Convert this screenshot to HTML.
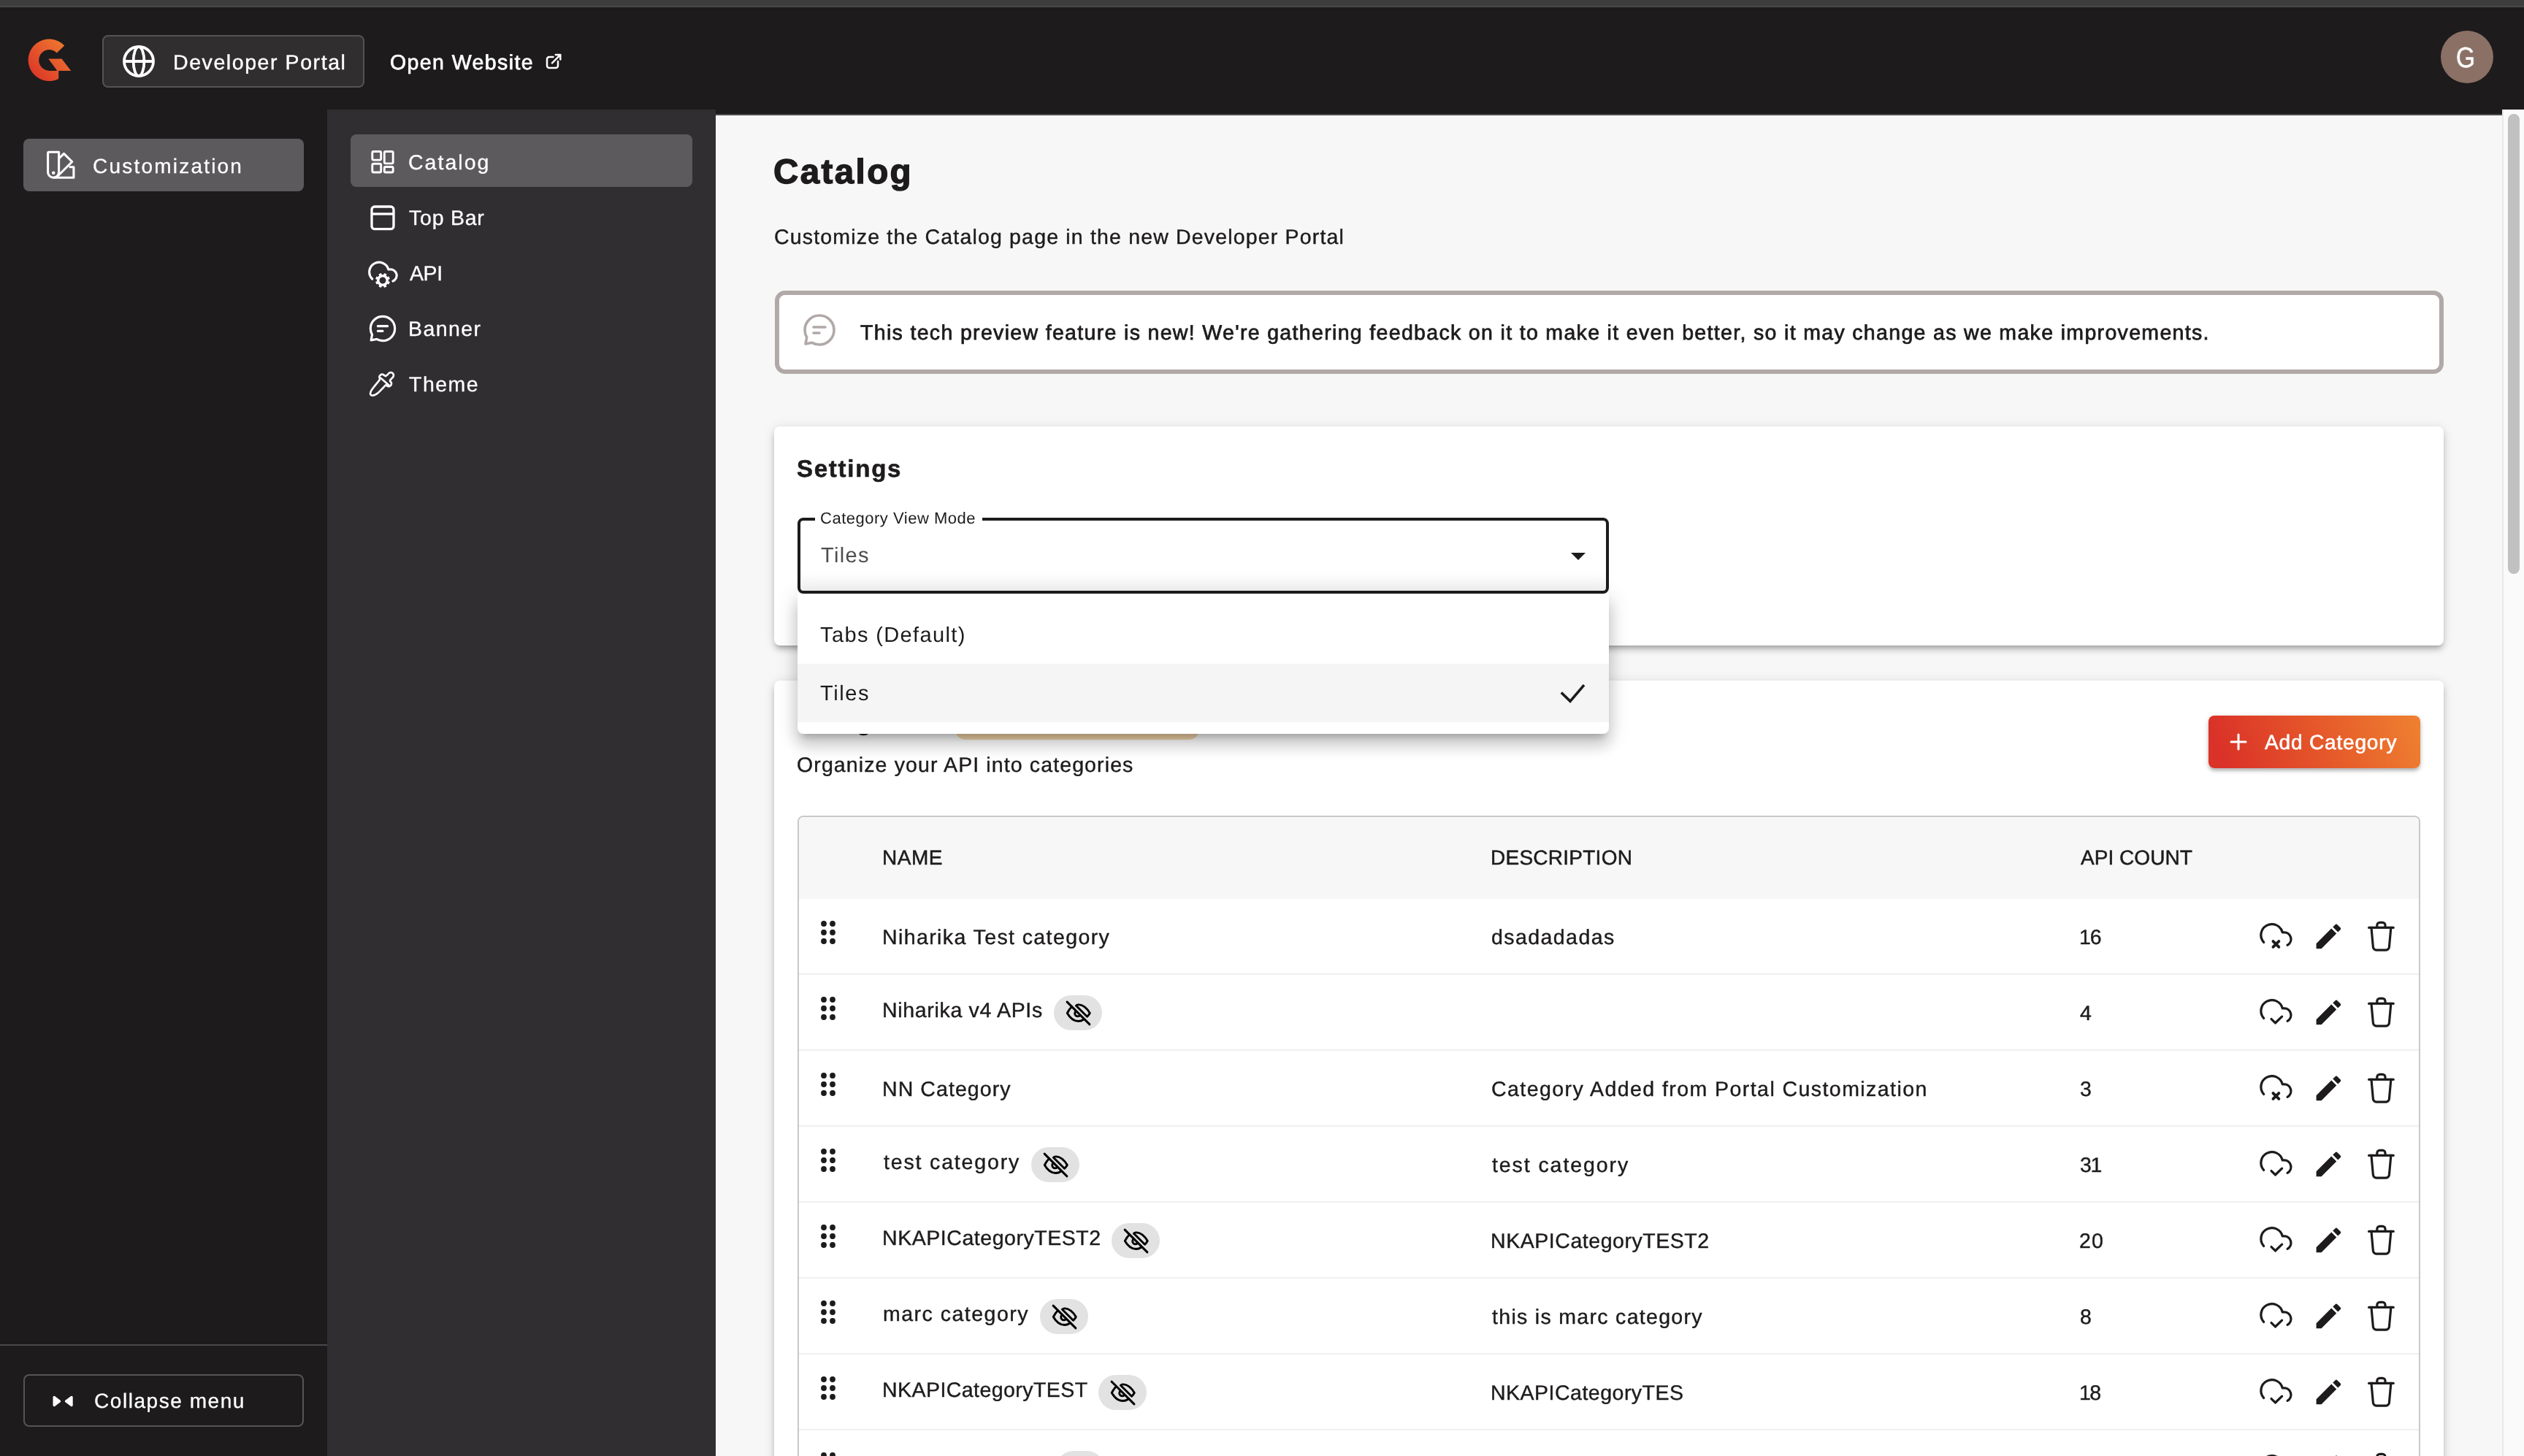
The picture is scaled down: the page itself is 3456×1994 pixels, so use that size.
<!DOCTYPE html>
<html lang="en">
<head>
<meta charset="utf-8">
<title>Catalog - Developer Portal Customization</title>
<style>
*{box-sizing:border-box;margin:0;padding:0}
html,body{width:3456px;height:1994px;overflow:hidden;background:#f7f7f7}
body{position:relative;text-rendering:geometricPrecision;font-family:"Liberation Sans",sans-serif;color:#1d1b1c;-webkit-font-smoothing:antialiased}
.abs,.t{position:absolute}
.t{white-space:nowrap;line-height:1;display:block;will-change:transform}
svg{position:absolute;overflow:visible}
.topstrip{left:0;top:0;width:3456px;height:10px;background:#3d3d3d;border-bottom:2px solid #474948}
header{position:absolute;left:0;top:10px;width:3456px;height:148px;background:#1d1b1c;color:#fff}
.hline{left:980px;top:156px;width:2446px;height:2px;background:#4b494b}
.portal-btn{left:140px;top:38px;width:359px;height:72px;border:2px solid #555355;border-radius:8px;background:#302e2f}
.avatar{left:3342px;top:32px;width:72px;height:72px;border-radius:50%;background:#8b7066}
nav.side1{position:absolute;left:0;top:158px;width:448px;height:1836px;background:#1d1b1c;color:#fff}
nav.side2{position:absolute;left:448px;top:150px;width:532px;height:1844px;background:#302e30;color:#fff}
.active{background:#5c5a5c;border-radius:8px}
.sep{left:0;top:1683px;width:448px;height:2px;background:#4a484a}
.collapse{left:32px;top:1724px;width:384px;height:72px;border:2px solid #565456;border-radius:8px}
main{position:absolute;left:980px;top:158px;width:2446px;height:1836px;background:#f7f7f7}
.scroll{left:3426px;top:150px;width:30px;height:1844px;background:#fafafa;border-left:2px solid #e9e9e9}
.thumb{left:6px;top:6px;width:16px;height:630px;border-radius:8px;background:#c1c1c1}
.card{background:#fff;border-radius:8px;box-shadow:0 6px 6px -4px rgba(0,0,0,.2),0 6px 8px 0 rgba(0,0,0,.14),0 2px 16px 0 rgba(0,0,0,.12)}
.banner{left:81px;top:240px;width:2285px;height:114px;border:6px solid #b1a9a8;border-radius:14px;background:#fff}
.select{left:32px;top:125px;width:1111px;height:104px;border:4px solid #1d1b1c;border-radius:8px;background:linear-gradient(#fff 72%,#f3f3f3)}
.notch{left:20px;top:-6px;width:229px;height:10px;background:#fff}
.panel{left:1092px;top:813px;width:1111px;height:192px;background:#fff;border-radius:0 0 8px 8px;box-shadow:0 10px 10px -6px rgba(0,0,0,.2),0 16px 20px 2px rgba(0,0,0,.14),0 6px 28px 4px rgba(0,0,0,.12)}
.opt{left:0;width:1111px;height:80px}
.opt.sel{background:#f5f5f5}
.badge-warn{left:248px;top:30px;width:334px;height:51px;border-radius:14px;background:#f8d9ab}
.addbtn{left:1964px;top:48px;width:290px;height:72px;border-radius:8px;background:linear-gradient(68deg,#da3228 8%,#e5572a 52%,#ee7e30 96%);box-shadow:0 4px 5px -1px rgba(0,0,0,.25),0 2px 8px 0 rgba(0,0,0,.14);color:#fff}
.table{left:32px;top:185px;width:2222px;height:1100px;border:2px solid #cbc8c7;border-radius:8px;background:#fff;overflow:hidden}
.thead{left:0;top:0;width:2218px;height:112px;background:#f7f7f7}
.row{left:0;width:2218px;height:104px;border-bottom:2px solid #f1efef}
.hid{width:66px;height:48px;border-radius:24px;background:#e2e2e2}
</style>
</head>
<body>
<div class="abs topstrip"></div>

<header>
<svg style="left:0;top:-10px" width="140" height="168" viewBox="0 0 140 168" aria-label="Gravitee">
<defs><linearGradient id="lg" x1="44" y1="106" x2="94" y2="58" gradientUnits="userSpaceOnUse"><stop offset="0" stop-color="#dc3528"/><stop offset="1" stop-color="#f07c30"/></linearGradient></defs>
<path fill="url(#lg)" d="M88.2 62.5A28.75 28.75 0 1 0 80.2 108V96.9H67.3A14.4 14.4 0 1 1 77.8 72.4Z"/>
<path fill="url(#lg)" d="M66.2 80.5H84.5L97.2 97.1H78.4Z"/>
</svg>
<div class="abs portal-btn">
<svg style="left:24px;top:10px" width="48" height="48" viewBox="0 0 48 48" fill="none" stroke="#fff" stroke-width="3.8"><circle cx="24" cy="24" r="20"/><ellipse cx="24" cy="24" rx="7.4" ry="20"/><path d="M4 24H44"/></svg>
<span class="t" style="left:94.7px;top:21.9px;font-size:28.5px;letter-spacing:1.578px;color:#fff;-webkit-text-stroke:0.4px currentColor;">Developer Portal</span>
</div>
<span class="t" style="left:533.7px;top:61.9px;font-size:28.5px;letter-spacing:1.413px;color:#fff;-webkit-text-stroke:0.7px currentColor;">Open Website</span>
<svg style="left:744px;top:60px" width="28" height="28" viewBox="744 70 28 28" fill="none" stroke="#fff" stroke-width="2.5" stroke-linecap="round" stroke-linejoin="round"><path d="M757.5 78.1H752a3 3 0 0 0-3 3V90a3 3 0 0 0 3 3h9a3 3 0 0 0 3-3V84"/><path d="M756 86.3L767.2 75M760.8 74.9H767.3V81.6"/></svg>
<div class="abs avatar"><span class="t" style="left:-2.0px;top:17.6px;font-size:39px;letter-spacing:0.000px;color:#fff;-webkit-text-stroke:0.5px currentColor;width:72px;text-align:center;transform:scaleX(.86);">G</span></div>
</header>
<div class="abs hline"></div>
<nav class="side1">
<div class="abs active" style="left:32px;top:32px;width:384px;height:72px">
<svg style="left:28px;top:12px" width="48" height="48" viewBox="60 202 48 48" fill="none" stroke="#fff" stroke-width="3.1" stroke-linejoin="round"><path d="M67.1 208.2H80.6V235.7A7.5 7.5 0 0 1 65.6 235.7V209.7A1.5 1.5 0 0 1 67.1 208.2Z"/><path d="M80.6 217.2L87.5 210.3L98.7 221.5L78.7 241.5"/><path d="M94.6 228.8H100.9V243.3H73.1"/><circle cx="73.2" cy="236.7" r="2.3" fill="#fff" stroke="none"/></svg>
<span class="t" style="left:95.1px;top:23.5px;font-size:28px;letter-spacing:2.211px;color:#fff;-webkit-text-stroke:0.3px currentColor;">Customization</span>
</div>
<div class="abs sep"></div>
<div class="abs collapse">
<svg style="left:36px;top:24px" width="34" height="22" viewBox="70 1907 34 22" fill="#fff" stroke="#fff" stroke-width="3.2" stroke-linejoin="round"><path d="M74.1 1912.4V1923.6L81.6 1918Z"/><path d="M98.1 1912.4V1923.6L90.4 1918Z"/></svg>
<span class="t" style="left:95.3px;top:21.3px;font-size:28px;letter-spacing:1.551px;color:#fff;-webkit-text-stroke:0.3px currentColor;">Collapse menu</span>
</div>
</nav>
<nav class="side2">
<div class="abs active" style="left:32px;top:34px;width:468px;height:72px">
<svg style="left:24px;top:18px" width="40" height="40" viewBox="0 0 40 40" fill="none" stroke="#fff" stroke-width="2.9" stroke-linecap="round" stroke-linejoin="round"><rect x="5.8" y="5.5" width="11.9" height="11.6" rx="1.8"/><rect x="22.3" y="5.5" width="11.9" height="16.4" rx="1.8"/><rect x="5.8" y="22.2" width="11.9" height="11.8" rx="1.8"/><rect x="22.3" y="26.5" width="11.9" height="7.5" rx="1.8"/></svg>
<span class="t" style="left:78.9px;top:25.3px;font-size:28.5px;letter-spacing:2.025px;color:#fff;-webkit-text-stroke:0.3px currentColor;">Catalog</span>
</div>
<div class="abs" style="left:32px;top:110px;width:468px;height:72px">
<svg style="left:24px;top:18px" width="40" height="40" viewBox="0 0 24 24" fill="none" stroke="#fff" stroke-width="2.0" stroke-linecap="round" stroke-linejoin="round"><rect x="3" y="3" width="18" height="18.4" rx="2.4"/><path d="M3 9H21" stroke-linecap="butt"/></svg>
<span class="t" style="left:79.7px;top:25.3px;font-size:28.5px;letter-spacing:0.766px;color:#fff;-webkit-text-stroke:0.3px currentColor;">Top Bar</span>
</div>
<div class="abs" style="left:32px;top:186px;width:468px;height:72px">
<svg style="left:24px;top:18px" width="40" height="40" viewBox="0 0 24 24" fill="none" stroke="#fff" stroke-width="1.9" stroke-linecap="round" stroke-linejoin="round"><path d="M20.4 18.6A5 5 0 0 0 18 9h-1.26A8 8 0 1 0 3.4 16.8"/><circle cx="12" cy="18" r="3.75" stroke-width="2.1"/><path d="M16.07 19.68L17.50 20.28M13.68 22.07L14.28 23.50M10.32 22.07L9.72 23.50M7.93 19.68L6.50 20.28M7.93 16.32L6.50 15.72M10.32 13.93L9.72 12.50M13.68 13.93L14.28 12.50M16.07 16.32L17.50 15.72" stroke-width="2.3" stroke-linecap="butt"/></svg>
<span class="t" style="left:80.9px;top:25.3px;font-size:28.5px;letter-spacing:-0.426px;color:#fff;-webkit-text-stroke:0.3px currentColor;">API</span>
</div>
<div class="abs" style="left:32px;top:262px;width:468px;height:72px">
<svg style="left:24px;top:18px" width="40" height="40" viewBox="0 0 24 24" fill="none" stroke="#fff" stroke-width="1.9" stroke-linecap="round" stroke-linejoin="round"><path d="M8 10H16M8 14H12"/><path d="M12 22C17.5228 22 22 17.5228 22 12C22 6.47715 17.5228 2 12 2C6.47715 2 2 6.47715 2 12C2 13.8214 2.48697 15.5291 3.33782 17L2.5 21.5L7 20.6622C8.47087 21.513 10.1786 22 12 22Z"/></svg>
<span class="t" style="left:78.7px;top:25.3px;font-size:28.5px;letter-spacing:1.442px;color:#fff;-webkit-text-stroke:0.3px currentColor;">Banner</span>
</div>
<div class="abs" style="left:32px;top:338px;width:468px;height:72px">
<svg style="left:24px;top:18px" width="40" height="40" viewBox="0 0 24 24" fill="none" stroke="#fff" stroke-width="1.6" stroke-linecap="round" stroke-linejoin="round"><path d="M9.55 8.30C9.97 7.32 9.13 6.69 9.21 6.08C9.29 5.47 9.63 4.98 10.04 4.64C10.45 4.30 11.16 4.02 11.68 4.02C12.20 4.02 12.68 4.40 13.13 4.64C13.58 4.88 13.88 5.54 14.36 5.47C14.84 5.40 15.50 4.68 16.01 4.23C16.53 3.78 16.90 3.06 17.45 2.79C18.00 2.52 18.76 2.41 19.31 2.58C19.86 2.75 20.51 3.30 20.75 3.82C20.99 4.33 20.96 5.09 20.75 5.67C20.54 6.25 19.92 6.84 19.51 7.32C19.10 7.80 18.52 8.18 18.28 8.56C18.04 8.94 17.93 9.21 18.07 9.59C18.21 9.97 18.96 10.30 19.10 10.82C19.24 11.34 19.17 12.16 18.90 12.68C18.62 13.20 18.00 13.77 17.45 13.91C16.90 14.05 16.08 13.67 15.60 13.50C15.12 13.33 15.24 12.49 14.57 12.88C13.90 13.27 12.60 14.85 11.60 15.85C10.60 16.85 9.54 18.05 8.59 18.86C7.64 19.67 6.78 20.30 5.92 20.71C5.06 21.12 4.09 21.36 3.44 21.33C2.79 21.30 2.21 21.03 2.00 20.51C1.79 20.00 1.90 19.06 2.21 18.24C2.52 17.41 3.10 16.61 3.85 15.56C4.60 14.51 5.75 13.16 6.70 11.95C7.65 10.74 9.13 9.28 9.55 8.30Z"/><path d="M10.45 7.12L17.04 12.88"/></svg>
<span class="t" style="left:79.7px;top:25.3px;font-size:28.5px;letter-spacing:1.476px;color:#fff;-webkit-text-stroke:0.3px currentColor;">Theme</span>
</div>
</nav>
<main>
<h1 class="t" style="left:79.1px;top:53.8px;font-size:47.5px;letter-spacing:2.407px;font-weight:700;-webkit-text-stroke:1.4px currentColor;">Catalog</h1>
<p class="t" style="left:79.6px;top:152.5px;font-size:28.5px;letter-spacing:1.175px;-webkit-text-stroke:0.4px currentColor;">Customize the Catalog page in the new Developer Portal</p>
<div class="abs banner">
<svg style="left:31px;top:24px" width="48" height="48" viewBox="0 0 24 24" fill="none" stroke="#b1a9a8" stroke-width="1.8" stroke-linecap="round" stroke-linejoin="round"><path d="M8 10H16M8 14H12"/><path d="M12 22C17.5228 22 22 17.5228 22 12C22 6.47715 17.5228 2 12 2C6.47715 2 2 6.47715 2 12C2 13.8214 2.48697 15.5291 3.33782 17L2.5 21.5L7 20.6622C8.47087 21.513 10.1786 22 12 22Z"/></svg>
<span class="t" style="left:111.1px;top:37.8px;font-size:28.5px;letter-spacing:1.333px;-webkit-text-stroke:0.75px currentColor;">This tech preview feature is new! We&#x27;re gathering feedback on it to make it even better, so it may change as we make improvements.</span>
</div>
<section class="abs card" style="left:80px;top:426px;width:2286px;height:300px">
<h2 class="t" style="left:31.2px;top:40.8px;font-size:33px;letter-spacing:1.746px;font-weight:700;-webkit-text-stroke:0.6px currentColor;">Settings</h2>
<div class="abs select">
<div class="abs notch"></div>
<span class="t" style="left:27.4px;top:-13.9px;font-size:22px;letter-spacing:0.511px;">Category View Mode</span>
<span class="t" style="left:27.8px;top:34.1px;font-size:29px;letter-spacing:1.337px;color:#4f4d4e;">Tiles</span>
<svg style="left:1055px;top:44px" width="20" height="10" viewBox="0 0 20 10"><path d="M0 0H20L10 10Z" fill="#1d1b1c"/></svg>
</div>
</section>
<section class="abs card" style="left:80px;top:774px;width:2286px;height:1300px">
<h2 class="t" style="left:30.6px;top:40.1px;font-size:33px;letter-spacing:2.572px;font-weight:700;-webkit-text-stroke:0.6px currentColor;">Categories</h2>
<div class="abs badge-warn"></div>
<p class="t" style="left:31.0px;top:102.4px;font-size:28.5px;letter-spacing:1.119px;-webkit-text-stroke:0.4px currentColor;">Organize your API into categories</p>
<div class="abs addbtn">
<svg style="left:30px;top:25px" width="22" height="22" viewBox="0 0 22 22" stroke="#fff" stroke-width="3" stroke-linecap="round"><path d="M11 1V21M1 11H21"/></svg>
<span class="t" style="left:76.6px;top:23.3px;font-size:28px;letter-spacing:0.836px;color:#fff;-webkit-text-stroke:0.6px currentColor;">Add Category</span>
</div>
<div class="abs table">
<div class="abs thead">
<span class="t" style="left:114.2px;top:42.0px;font-size:28px;letter-spacing:0.501px;-webkit-text-stroke:0.5px currentColor;">NAME</span>
<span class="t" style="left:947.2px;top:42.0px;font-size:28px;letter-spacing:0.253px;-webkit-text-stroke:0.5px currentColor;">DESCRIPTION</span>
<span class="t" style="left:1754.6px;top:42.0px;font-size:28px;letter-spacing:0.043px;-webkit-text-stroke:0.5px currentColor;">API COUNT</span>
</div>
<div class="abs row" style="top:112px">
<svg style="left:16px;top:22px" width="48" height="48" viewBox="0 0 24 24" fill="#1d1b1c"><circle cx="9" cy="6" r="1.95"/><circle cx="15" cy="6" r="1.95"/><circle cx="9" cy="12" r="1.95"/><circle cx="15" cy="12" r="1.95"/><circle cx="9" cy="18" r="1.95"/><circle cx="15" cy="18" r="1.95"/></svg>
<span class="t" style="left:114.3px;top:38.5px;font-size:28.5px;letter-spacing:1.398px;-webkit-text-stroke:0.4px currentColor;">Niharika Test category</span>
<span class="t" style="left:948.4px;top:38.5px;font-size:28.5px;letter-spacing:1.436px;-webkit-text-stroke:0.4px currentColor;">dsadadadas</span>
<span class="t" style="left:1752.5px;top:38.5px;font-size:28.5px;letter-spacing:0.000px;-webkit-text-stroke:0.4px currentColor;letter-spacing:-1px;">16</span>
<svg style="left:1999.6px;top:28.6px" width="44.8" height="44.8" viewBox="0 0 24 24" fill="none" stroke="#1d1b1c" stroke-width="1.75" stroke-linecap="round" stroke-linejoin="round"><path d="M20.39 18.39A5 5 0 0 0 18 9h-1.26A8 8 0 1 0 3 16.3"/><path d="M9.9 15.6L14.1 19.8M14.1 15.6L9.9 19.8" stroke-width="2.1"/></svg>
<svg style="left:2071.6px;top:28.6px" width="44.8" height="44.8" viewBox="0 0 24 24" fill="#1d1b1c"><path d="M3 17.25V21h3.75L17.81 9.94l-3.75-3.75L3 17.25zM20.71 7.04c.39-.39.39-1.02 0-1.41l-2.34-2.34c-.39-.39-1.02-.39-1.41 0l-1.83 1.83 3.75 3.75 1.83-1.83z"/></svg>
<svg style="left:2143.6px;top:28.6px" width="44.8" height="44.8" viewBox="0 0 24 24" fill="none" stroke="#1d1b1c" stroke-width="1.7" stroke-linecap="round" stroke-linejoin="round"><path d="M3 5.6H21"/><path d="M9 5.6V3.8a2 2 0 0 1 2-2h2a2 2 0 0 1 2 2V5.6"/><path d="M4.8 5.6L6.1 19.9a2.3 2.3 0 0 0 2.3 2.1h7.2a2.3 2.3 0 0 0 2.3-2.1L19.2 5.6"/></svg>
</div>
<div class="abs row" style="top:216px">
<svg style="left:16px;top:22px" width="48" height="48" viewBox="0 0 24 24" fill="#1d1b1c"><circle cx="9" cy="6" r="1.95"/><circle cx="15" cy="6" r="1.95"/><circle cx="9" cy="12" r="1.95"/><circle cx="15" cy="12" r="1.95"/><circle cx="9" cy="18" r="1.95"/><circle cx="15" cy="18" r="1.95"/></svg>
<span class="t" style="left:114.3px;top:35.2px;font-size:28.5px;letter-spacing:0.672px;-webkit-text-stroke:0.4px currentColor;">Niharika v4 APIs</span>
<div class="abs hid" style="left:349.2px;top:28px"><svg style="left:12.5px;top:3.5px" width="41" height="41" viewBox="-20.5 -20.5 41 41" fill="none" stroke="#000" stroke-width="2.9" stroke-linecap="round" stroke-linejoin="round"><path d="M-15.4-15.4L15.4 15.4"/><path d="M-9-8.8C-11.6-6.4-13.6-3.2-15.2 0C-12 5.6-6.4 11 0 11C2.6 11 5 10.2 7.2 8.7"/><path d="M-3.1-10.3C-2-11.4-.6-11.7 .6-11.6C7-11.2 12.6-5.4 15.8 0C14.8 1.8 13.6 3.4 12 4.8Z"/><path d="M-3.6-2.4A3.9 3.9 0 1 0 2 3.2"/></svg></div>
<span class="t" style="left:1754.0px;top:38.5px;font-size:28.5px;letter-spacing:0.000px;-webkit-text-stroke:0.4px currentColor;">4</span>
<svg style="left:1999.6px;top:28.6px" width="44.8" height="44.8" viewBox="0 0 24 24" fill="none" stroke="#1d1b1c" stroke-width="1.75" stroke-linecap="round" stroke-linejoin="round"><path d="M20.39 18.39A5 5 0 0 0 18 9h-1.26A8 8 0 1 0 3 16.3"/><path d="M8.6 16.9L11.5 19.8L16.4 15.1"/></svg>
<svg style="left:2071.6px;top:28.6px" width="44.8" height="44.8" viewBox="0 0 24 24" fill="#1d1b1c"><path d="M3 17.25V21h3.75L17.81 9.94l-3.75-3.75L3 17.25zM20.71 7.04c.39-.39.39-1.02 0-1.41l-2.34-2.34c-.39-.39-1.02-.39-1.41 0l-1.83 1.83 3.75 3.75 1.83-1.83z"/></svg>
<svg style="left:2143.6px;top:28.6px" width="44.8" height="44.8" viewBox="0 0 24 24" fill="none" stroke="#1d1b1c" stroke-width="1.7" stroke-linecap="round" stroke-linejoin="round"><path d="M3 5.6H21"/><path d="M9 5.6V3.8a2 2 0 0 1 2-2h2a2 2 0 0 1 2 2V5.6"/><path d="M4.8 5.6L6.1 19.9a2.3 2.3 0 0 0 2.3 2.1h7.2a2.3 2.3 0 0 0 2.3-2.1L19.2 5.6"/></svg>
</div>
<div class="abs row" style="top:320px">
<svg style="left:16px;top:22px" width="48" height="48" viewBox="0 0 24 24" fill="#1d1b1c"><circle cx="9" cy="6" r="1.95"/><circle cx="15" cy="6" r="1.95"/><circle cx="9" cy="12" r="1.95"/><circle cx="15" cy="12" r="1.95"/><circle cx="9" cy="18" r="1.95"/><circle cx="15" cy="18" r="1.95"/></svg>
<span class="t" style="left:114.3px;top:38.5px;font-size:28.5px;letter-spacing:1.077px;-webkit-text-stroke:0.4px currentColor;">NN Category</span>
<span class="t" style="left:948.2px;top:38.5px;font-size:28.5px;letter-spacing:1.441px;-webkit-text-stroke:0.4px currentColor;">Category Added from Portal Customization</span>
<span class="t" style="left:1753.6px;top:38.5px;font-size:28.5px;letter-spacing:0.000px;-webkit-text-stroke:0.4px currentColor;">3</span>
<svg style="left:1999.6px;top:28.6px" width="44.8" height="44.8" viewBox="0 0 24 24" fill="none" stroke="#1d1b1c" stroke-width="1.75" stroke-linecap="round" stroke-linejoin="round"><path d="M20.39 18.39A5 5 0 0 0 18 9h-1.26A8 8 0 1 0 3 16.3"/><path d="M9.9 15.6L14.1 19.8M14.1 15.6L9.9 19.8" stroke-width="2.1"/></svg>
<svg style="left:2071.6px;top:28.6px" width="44.8" height="44.8" viewBox="0 0 24 24" fill="#1d1b1c"><path d="M3 17.25V21h3.75L17.81 9.94l-3.75-3.75L3 17.25zM20.71 7.04c.39-.39.39-1.02 0-1.41l-2.34-2.34c-.39-.39-1.02-.39-1.41 0l-1.83 1.83 3.75 3.75 1.83-1.83z"/></svg>
<svg style="left:2143.6px;top:28.6px" width="44.8" height="44.8" viewBox="0 0 24 24" fill="none" stroke="#1d1b1c" stroke-width="1.7" stroke-linecap="round" stroke-linejoin="round"><path d="M3 5.6H21"/><path d="M9 5.6V3.8a2 2 0 0 1 2-2h2a2 2 0 0 1 2 2V5.6"/><path d="M4.8 5.6L6.1 19.9a2.3 2.3 0 0 0 2.3 2.1h7.2a2.3 2.3 0 0 0 2.3-2.1L19.2 5.6"/></svg>
</div>
<div class="abs row" style="top:424px">
<svg style="left:16px;top:22px" width="48" height="48" viewBox="0 0 24 24" fill="#1d1b1c"><circle cx="9" cy="6" r="1.95"/><circle cx="15" cy="6" r="1.95"/><circle cx="9" cy="12" r="1.95"/><circle cx="15" cy="12" r="1.95"/><circle cx="9" cy="18" r="1.95"/><circle cx="15" cy="18" r="1.95"/></svg>
<span class="t" style="left:116.2px;top:35.2px;font-size:28.5px;letter-spacing:1.843px;-webkit-text-stroke:0.4px currentColor;">test category</span>
<div class="abs hid" style="left:318.2px;top:28px"><svg style="left:12.5px;top:3.5px" width="41" height="41" viewBox="-20.5 -20.5 41 41" fill="none" stroke="#000" stroke-width="2.9" stroke-linecap="round" stroke-linejoin="round"><path d="M-15.4-15.4L15.4 15.4"/><path d="M-9-8.8C-11.6-6.4-13.6-3.2-15.2 0C-12 5.6-6.4 11 0 11C2.6 11 5 10.2 7.2 8.7"/><path d="M-3.1-10.3C-2-11.4-.6-11.7 .6-11.6C7-11.2 12.6-5.4 15.8 0C14.8 1.8 13.6 3.4 12 4.8Z"/><path d="M-3.6-2.4A3.9 3.9 0 1 0 2 3.2"/></svg></div>
<span class="t" style="left:949.2px;top:38.5px;font-size:28.5px;letter-spacing:1.918px;-webkit-text-stroke:0.4px currentColor;">test category</span>
<span class="t" style="left:1753.6px;top:38.5px;font-size:28.5px;letter-spacing:0.000px;-webkit-text-stroke:0.4px currentColor;letter-spacing:-1.3px;">31</span>
<svg style="left:1999.6px;top:28.6px" width="44.8" height="44.8" viewBox="0 0 24 24" fill="none" stroke="#1d1b1c" stroke-width="1.75" stroke-linecap="round" stroke-linejoin="round"><path d="M20.39 18.39A5 5 0 0 0 18 9h-1.26A8 8 0 1 0 3 16.3"/><path d="M8.6 16.9L11.5 19.8L16.4 15.1"/></svg>
<svg style="left:2071.6px;top:28.6px" width="44.8" height="44.8" viewBox="0 0 24 24" fill="#1d1b1c"><path d="M3 17.25V21h3.75L17.81 9.94l-3.75-3.75L3 17.25zM20.71 7.04c.39-.39.39-1.02 0-1.41l-2.34-2.34c-.39-.39-1.02-.39-1.41 0l-1.83 1.83 3.75 3.75 1.83-1.83z"/></svg>
<svg style="left:2143.6px;top:28.6px" width="44.8" height="44.8" viewBox="0 0 24 24" fill="none" stroke="#1d1b1c" stroke-width="1.7" stroke-linecap="round" stroke-linejoin="round"><path d="M3 5.6H21"/><path d="M9 5.6V3.8a2 2 0 0 1 2-2h2a2 2 0 0 1 2 2V5.6"/><path d="M4.8 5.6L6.1 19.9a2.3 2.3 0 0 0 2.3 2.1h7.2a2.3 2.3 0 0 0 2.3-2.1L19.2 5.6"/></svg>
</div>
<div class="abs row" style="top:528px">
<svg style="left:16px;top:22px" width="48" height="48" viewBox="0 0 24 24" fill="#1d1b1c"><circle cx="9" cy="6" r="1.95"/><circle cx="15" cy="6" r="1.95"/><circle cx="9" cy="12" r="1.95"/><circle cx="15" cy="12" r="1.95"/><circle cx="9" cy="18" r="1.95"/><circle cx="15" cy="18" r="1.95"/></svg>
<span class="t" style="left:114.3px;top:35.2px;font-size:28.5px;letter-spacing:0.548px;-webkit-text-stroke:0.4px currentColor;">NKAPICategoryTEST2</span>
<div class="abs hid" style="left:428.0px;top:28px"><svg style="left:12.5px;top:3.5px" width="41" height="41" viewBox="-20.5 -20.5 41 41" fill="none" stroke="#000" stroke-width="2.9" stroke-linecap="round" stroke-linejoin="round"><path d="M-15.4-15.4L15.4 15.4"/><path d="M-9-8.8C-11.6-6.4-13.6-3.2-15.2 0C-12 5.6-6.4 11 0 11C2.6 11 5 10.2 7.2 8.7"/><path d="M-3.1-10.3C-2-11.4-.6-11.7 .6-11.6C7-11.2 12.6-5.4 15.8 0C14.8 1.8 13.6 3.4 12 4.8Z"/><path d="M-3.6-2.4A3.9 3.9 0 1 0 2 3.2"/></svg></div>
<span class="t" style="left:947.3px;top:38.5px;font-size:28.5px;letter-spacing:0.548px;-webkit-text-stroke:0.4px currentColor;">NKAPICategoryTEST2</span>
<span class="t" style="left:1753.3px;top:38.5px;font-size:28.5px;letter-spacing:0.000px;-webkit-text-stroke:0.4px currentColor;letter-spacing:1.2px;">20</span>
<svg style="left:1999.6px;top:28.6px" width="44.8" height="44.8" viewBox="0 0 24 24" fill="none" stroke="#1d1b1c" stroke-width="1.75" stroke-linecap="round" stroke-linejoin="round"><path d="M20.39 18.39A5 5 0 0 0 18 9h-1.26A8 8 0 1 0 3 16.3"/><path d="M8.6 16.9L11.5 19.8L16.4 15.1"/></svg>
<svg style="left:2071.6px;top:28.6px" width="44.8" height="44.8" viewBox="0 0 24 24" fill="#1d1b1c"><path d="M3 17.25V21h3.75L17.81 9.94l-3.75-3.75L3 17.25zM20.71 7.04c.39-.39.39-1.02 0-1.41l-2.34-2.34c-.39-.39-1.02-.39-1.41 0l-1.83 1.83 3.75 3.75 1.83-1.83z"/></svg>
<svg style="left:2143.6px;top:28.6px" width="44.8" height="44.8" viewBox="0 0 24 24" fill="none" stroke="#1d1b1c" stroke-width="1.7" stroke-linecap="round" stroke-linejoin="round"><path d="M3 5.6H21"/><path d="M9 5.6V3.8a2 2 0 0 1 2-2h2a2 2 0 0 1 2 2V5.6"/><path d="M4.8 5.6L6.1 19.9a2.3 2.3 0 0 0 2.3 2.1h7.2a2.3 2.3 0 0 0 2.3-2.1L19.2 5.6"/></svg>
</div>
<div class="abs row" style="top:632px">
<svg style="left:16px;top:22px" width="48" height="48" viewBox="0 0 24 24" fill="#1d1b1c"><circle cx="9" cy="6" r="1.95"/><circle cx="15" cy="6" r="1.95"/><circle cx="9" cy="12" r="1.95"/><circle cx="15" cy="12" r="1.95"/><circle cx="9" cy="18" r="1.95"/><circle cx="15" cy="18" r="1.95"/></svg>
<span class="t" style="left:114.7px;top:35.2px;font-size:28.5px;letter-spacing:1.499px;-webkit-text-stroke:0.4px currentColor;">marc category</span>
<div class="abs hid" style="left:330.4px;top:28px"><svg style="left:12.5px;top:3.5px" width="41" height="41" viewBox="-20.5 -20.5 41 41" fill="none" stroke="#000" stroke-width="2.9" stroke-linecap="round" stroke-linejoin="round"><path d="M-15.4-15.4L15.4 15.4"/><path d="M-9-8.8C-11.6-6.4-13.6-3.2-15.2 0C-12 5.6-6.4 11 0 11C2.6 11 5 10.2 7.2 8.7"/><path d="M-3.1-10.3C-2-11.4-.6-11.7 .6-11.6C7-11.2 12.6-5.4 15.8 0C14.8 1.8 13.6 3.4 12 4.8Z"/><path d="M-3.6-2.4A3.9 3.9 0 1 0 2 3.2"/></svg></div>
<span class="t" style="left:949.2px;top:38.5px;font-size:28.5px;letter-spacing:1.313px;-webkit-text-stroke:0.4px currentColor;">this is marc category</span>
<span class="t" style="left:1753.5px;top:38.5px;font-size:28.5px;letter-spacing:0.000px;-webkit-text-stroke:0.4px currentColor;">8</span>
<svg style="left:1999.6px;top:28.6px" width="44.8" height="44.8" viewBox="0 0 24 24" fill="none" stroke="#1d1b1c" stroke-width="1.75" stroke-linecap="round" stroke-linejoin="round"><path d="M20.39 18.39A5 5 0 0 0 18 9h-1.26A8 8 0 1 0 3 16.3"/><path d="M8.6 16.9L11.5 19.8L16.4 15.1"/></svg>
<svg style="left:2071.6px;top:28.6px" width="44.8" height="44.8" viewBox="0 0 24 24" fill="#1d1b1c"><path d="M3 17.25V21h3.75L17.81 9.94l-3.75-3.75L3 17.25zM20.71 7.04c.39-.39.39-1.02 0-1.41l-2.34-2.34c-.39-.39-1.02-.39-1.41 0l-1.83 1.83 3.75 3.75 1.83-1.83z"/></svg>
<svg style="left:2143.6px;top:28.6px" width="44.8" height="44.8" viewBox="0 0 24 24" fill="none" stroke="#1d1b1c" stroke-width="1.7" stroke-linecap="round" stroke-linejoin="round"><path d="M3 5.6H21"/><path d="M9 5.6V3.8a2 2 0 0 1 2-2h2a2 2 0 0 1 2 2V5.6"/><path d="M4.8 5.6L6.1 19.9a2.3 2.3 0 0 0 2.3 2.1h7.2a2.3 2.3 0 0 0 2.3-2.1L19.2 5.6"/></svg>
</div>
<div class="abs row" style="top:736px">
<svg style="left:16px;top:22px" width="48" height="48" viewBox="0 0 24 24" fill="#1d1b1c"><circle cx="9" cy="6" r="1.95"/><circle cx="15" cy="6" r="1.95"/><circle cx="9" cy="12" r="1.95"/><circle cx="15" cy="12" r="1.95"/><circle cx="9" cy="18" r="1.95"/><circle cx="15" cy="18" r="1.95"/></svg>
<span class="t" style="left:114.3px;top:35.2px;font-size:28.5px;letter-spacing:0.449px;-webkit-text-stroke:0.4px currentColor;">NKAPICategoryTEST</span>
<div class="abs hid" style="left:410.3px;top:28px"><svg style="left:12.5px;top:3.5px" width="41" height="41" viewBox="-20.5 -20.5 41 41" fill="none" stroke="#000" stroke-width="2.9" stroke-linecap="round" stroke-linejoin="round"><path d="M-15.4-15.4L15.4 15.4"/><path d="M-9-8.8C-11.6-6.4-13.6-3.2-15.2 0C-12 5.6-6.4 11 0 11C2.6 11 5 10.2 7.2 8.7"/><path d="M-3.1-10.3C-2-11.4-.6-11.7 .6-11.6C7-11.2 12.6-5.4 15.8 0C14.8 1.8 13.6 3.4 12 4.8Z"/><path d="M-3.6-2.4A3.9 3.9 0 1 0 2 3.2"/></svg></div>
<span class="t" style="left:947.3px;top:38.5px;font-size:28.5px;letter-spacing:0.496px;-webkit-text-stroke:0.4px currentColor;">NKAPICategoryTES</span>
<span class="t" style="left:1752.5px;top:38.5px;font-size:28.5px;letter-spacing:0.000px;-webkit-text-stroke:0.4px currentColor;letter-spacing:-1.5px;">18</span>
<svg style="left:1999.6px;top:28.6px" width="44.8" height="44.8" viewBox="0 0 24 24" fill="none" stroke="#1d1b1c" stroke-width="1.75" stroke-linecap="round" stroke-linejoin="round"><path d="M20.39 18.39A5 5 0 0 0 18 9h-1.26A8 8 0 1 0 3 16.3"/><path d="M8.6 16.9L11.5 19.8L16.4 15.1"/></svg>
<svg style="left:2071.6px;top:28.6px" width="44.8" height="44.8" viewBox="0 0 24 24" fill="#1d1b1c"><path d="M3 17.25V21h3.75L17.81 9.94l-3.75-3.75L3 17.25zM20.71 7.04c.39-.39.39-1.02 0-1.41l-2.34-2.34c-.39-.39-1.02-.39-1.41 0l-1.83 1.83 3.75 3.75 1.83-1.83z"/></svg>
<svg style="left:2143.6px;top:28.6px" width="44.8" height="44.8" viewBox="0 0 24 24" fill="none" stroke="#1d1b1c" stroke-width="1.7" stroke-linecap="round" stroke-linejoin="round"><path d="M3 5.6H21"/><path d="M9 5.6V3.8a2 2 0 0 1 2-2h2a2 2 0 0 1 2 2V5.6"/><path d="M4.8 5.6L6.1 19.9a2.3 2.3 0 0 0 2.3 2.1h7.2a2.3 2.3 0 0 0 2.3-2.1L19.2 5.6"/></svg>
</div>
<div class="abs row" style="top:840px">
<svg style="left:16px;top:22px" width="48" height="48" viewBox="0 0 24 24" fill="#1d1b1c"><circle cx="9" cy="6" r="1.95"/><circle cx="15" cy="6" r="1.95"/><circle cx="9" cy="12" r="1.95"/><circle cx="15" cy="12" r="1.95"/><circle cx="9" cy="18" r="1.95"/><circle cx="15" cy="18" r="1.95"/></svg>
<div class="abs hid" style="left:352.0px;top:28px"><svg style="left:12.5px;top:3.5px" width="41" height="41" viewBox="-20.5 -20.5 41 41" fill="none" stroke="#000" stroke-width="2.9" stroke-linecap="round" stroke-linejoin="round"><path d="M-15.4-15.4L15.4 15.4"/><path d="M-9-8.8C-11.6-6.4-13.6-3.2-15.2 0C-12 5.6-6.4 11 0 11C2.6 11 5 10.2 7.2 8.7"/><path d="M-3.1-10.3C-2-11.4-.6-11.7 .6-11.6C7-11.2 12.6-5.4 15.8 0C14.8 1.8 13.6 3.4 12 4.8Z"/><path d="M-3.6-2.4A3.9 3.9 0 1 0 2 3.2"/></svg></div>
<svg style="left:1999.6px;top:28.6px" width="44.8" height="44.8" viewBox="0 0 24 24" fill="none" stroke="#1d1b1c" stroke-width="1.75" stroke-linecap="round" stroke-linejoin="round"><path d="M20.39 18.39A5 5 0 0 0 18 9h-1.26A8 8 0 1 0 3 16.3"/><path d="M8.6 16.9L11.5 19.8L16.4 15.1"/></svg>
<svg style="left:2071.6px;top:28.6px" width="44.8" height="44.8" viewBox="0 0 24 24" fill="#1d1b1c"><path d="M3 17.25V21h3.75L17.81 9.94l-3.75-3.75L3 17.25zM20.71 7.04c.39-.39.39-1.02 0-1.41l-2.34-2.34c-.39-.39-1.02-.39-1.41 0l-1.83 1.83 3.75 3.75 1.83-1.83z"/></svg>
<svg style="left:2143.6px;top:28.6px" width="44.8" height="44.8" viewBox="0 0 24 24" fill="none" stroke="#1d1b1c" stroke-width="1.7" stroke-linecap="round" stroke-linejoin="round"><path d="M3 5.6H21"/><path d="M9 5.6V3.8a2 2 0 0 1 2-2h2a2 2 0 0 1 2 2V5.6"/><path d="M4.8 5.6L6.1 19.9a2.3 2.3 0 0 0 2.3 2.1h7.2a2.3 2.3 0 0 0 2.3-2.1L19.2 5.6"/></svg>
</div>
</div>
</section>
</main>
<div class="abs panel" role="listbox">
<div class="abs opt" style="top:16px"><span class="t" style="left:31.3px;top:27.0px;font-size:29px;letter-spacing:1.380px;">Tabs (Default)</span></div>
<div class="abs opt sel" style="top:96px"><span class="t" style="left:31.3px;top:27.0px;font-size:29px;letter-spacing:1.562px;">Tiles</span>
<svg style="left:1040px;top:24px" width="40" height="32" viewBox="2132 932 40 32" fill="none" stroke="#1d1b1c" stroke-width="3.6"><path d="M2137.8 947.5L2150 959.4L2169 937.2"/></svg>
</div>
</div>
<div class="abs scroll"><div class="abs thumb"></div></div>
</body></html>
